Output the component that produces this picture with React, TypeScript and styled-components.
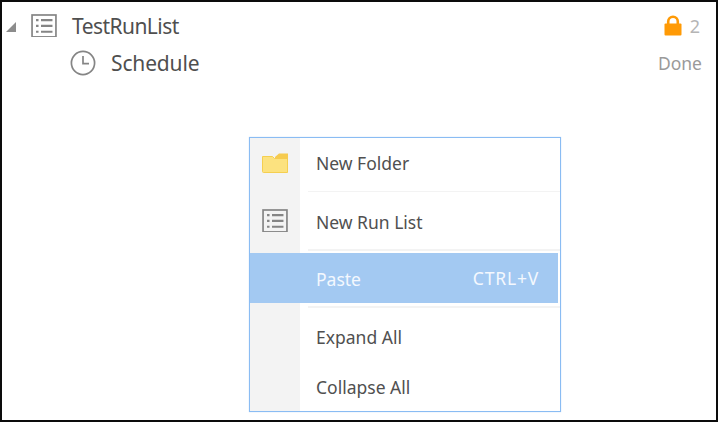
import React from "react";
import styled, { createGlobalStyle } from "styled-components";

const Global = createGlobalStyle`
  html, body { margin: 0; padding: 0; background: #fff; }
  body { font-family: "Noto Sans", "Open Sans", sans-serif; }
`;

const Frame = styled.div`
  width: 718px;
  height: 422px;
  box-sizing: border-box;
  border: 2px solid #0c0c0c;
  background: #fff;
  display: flex;
  flex-direction: column;
  overflow: hidden;
  position: relative;
`;

const Tree = styled.div`
  display: flex;
  flex-direction: column;
  padding: 5px 14px 0 4px;
`;

const Row = styled.div<{ $indent: number }>`
  height: 37px;
  display: flex;
  align-items: center;
  padding-left: ${(p) => p.$indent}px;
`;

const Caret = styled.svg`
  width: 10px;
  height: 10px;
  margin: 3px 15px 0 0;
  flex: none;
`;

const IconSlot = styled.span`
  display: flex;
  flex: none;
  margin-right: 15px;
`;

const RowLabel = styled.span<{ $tracking: number }>`
  font-size: 21px;
  letter-spacing: ${(p) => p.$tracking}px;
  color: #4f4f4f;
  flex: 1;
`;

const LockCount = styled.span`
  display: flex;
  align-items: center;
  gap: 8px;
  font-size: 18px;
  color: #b5b5b5;
  margin-right: 2px;
`;

const Status = styled.span`
  font-size: 17.5px;
  color: #9a9a9a;
`;

const Menu = styled.div`
  position: absolute;
  left: 247px;
  top: 135px;
  width: 312px;
  height: 275px;
  box-sizing: border-box;
  border: 1px solid #8abcf3;
  box-shadow: 0 0 1px #b5d5f8;
  background: linear-gradient(to right, #f3f3f3 50px, #fff 50px);
  display: flex;
  flex-direction: column;
`;

const Item = styled.div<{ $h: number; $active?: boolean }>`
  height: ${(p) => p.$h}px;
  box-sizing: border-box;
  display: flex;
  align-items: center;
  flex: none;
  margin-right: ${(p) => (p.$active ? 2 : 0)}px;
  background: ${(p) => (p.$active ? "#a3c9f2" : "transparent")};
  color: ${(p) => (p.$active ? "#f4f8fe" : "#505050")};
`;

const ItemIcon = styled.span<{ $up?: number }>`
  width: 50px;
  flex: none;
  display: flex;
  justify-content: center;
  padding-bottom: ${(p) => (p.$up ?? 0) * 2}px;
`;

const ItemLabel = styled.span<{ $up?: number; $down?: number }>`
  margin-left: 16px;
  font-size: 17.5px;
  flex: 1;
  padding-bottom: ${(p) => (p.$up ?? 0) * 2}px;
  padding-top: ${(p) => (p.$down ?? 0) * 2}px;
`;

const Shortcut = styled.span`
  font-size: 17.5px;
  letter-spacing: 0.8px;
  margin-right: 19px;
`;

const Separator = styled.div<{ $h: number }>`
  margin-left: 58px;
  height: ${(p) => p.$h}px;
  background: #f3f3f3;
  flex: none;
`;

const Spacer = styled.div<{ $h: number }>`
  height: ${(p) => p.$h}px;
  flex: none;
`;

const ListIcon = ({ size, stroke }: { size: number; stroke: string }) => (
  <svg width={size} height={size * 0.92} viewBox="0 0 26 24" fill="none">
    <rect x="1" y="1" width="24" height="22" stroke={stroke} strokeWidth="1.7" />
    <path
      d="M5 6.2h2.5M5 12h2.5M5 17.8h2.5M10 6.2h11.5M10 12h11.5M10 17.8h11.5"
      stroke={stroke}
      strokeWidth="2.2"
    />
  </svg>
);

const ClockIcon = () => (
  <svg width="26" height="26" viewBox="0 0 26 26" fill="none">
    <circle cx="13" cy="13" r="11.6" stroke="#858585" strokeWidth="1.7" />
    <path d="M13 6v7.6h6" stroke="#858585" strokeWidth="1.7" />
  </svg>
);

const LockIcon = () => (
  <svg width="18" height="21" viewBox="0 0 18 21" fill="none">
    <path d="M4.2 10V6.5a4.8 4.8 0 0 1 9.6 0V10" stroke="#ff9a05" strokeWidth="2.6" />
    <rect x="0.5" y="8.5" width="17" height="12" rx="1" fill="#ff9a05" />
  </svg>
);

const FolderIcon = () => (
  <svg width="26" height="20" viewBox="0 0 26 20">
    <path d="M0.5 3.5h10l2 2h13v14H1.5a1 1 0 0 1-1-1z" fill="#fce27f" stroke="#f5cf50" strokeWidth="1" />
    <path d="M13 4l4-3.5h9v5.5H13z" fill="#f6cb4f" />
  </svg>
);

export default function App() {
  return (
    <>
      <Global />
      <Frame>
        <Tree>
          <Row $indent={0}>
            <Caret viewBox="0 0 10 10">
              <path d="M10 0v10H0z" fill="#8c8c8c" />
            </Caret>
            <IconSlot>
              <ListIcon size={26} stroke="#858585" />
            </IconSlot>
            <RowLabel $tracking={-0.55}>TestRunList</RowLabel>
            <LockCount>
              <LockIcon />2
            </LockCount>
          </Row>
          <Row $indent={64}>
            <IconSlot>
              <ClockIcon />
            </IconSlot>
            <RowLabel $tracking={-0.15}>Schedule</RowLabel>
            <Status>Done</Status>
          </Row>
        </Tree>
        <Menu>
          <Item $h={53}>
            <ItemIcon $up={2}>
              <FolderIcon />
            </ItemIcon>
            <ItemLabel $up={2}>New Folder</ItemLabel>
          </Item>
          <Separator $h={1} />
          <Item $h={57}>
            <ItemIcon>
              <ListIcon size={26} stroke="#858585" />
            </ItemIcon>
            <ItemLabel $down={1}>New Run List</ItemLabel>
          </Item>
          <Separator $h={2} />
          <Spacer $h={2} />
          <Item $h={50} $active>
            <ItemIcon />
            <ItemLabel $down={1}>Paste</ItemLabel>
            <Shortcut>CTRL+V</Shortcut>
          </Item>
          <Spacer $h={3} />
          <Separator $h={2} />
          <Item $h={50}>
            <ItemIcon />
            <ItemLabel $down={4}>Expand All</ItemLabel>
          </Item>
          <Item $h={50}>
            <ItemIcon />
            <ItemLabel $down={4}>Collapse All</ItemLabel>
          </Item>
        </Menu>
      </Frame>
    </>
  );
}
